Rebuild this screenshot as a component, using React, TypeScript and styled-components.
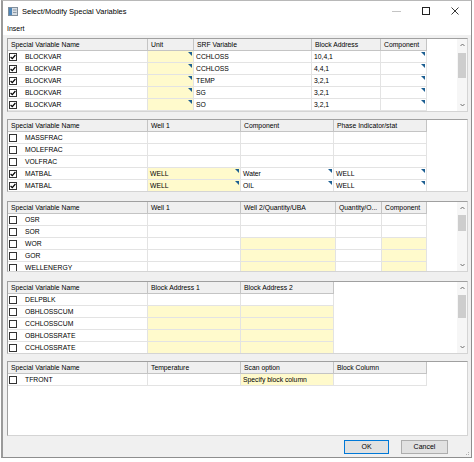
import React from 'react'
import styled, { createGlobalStyle } from 'styled-components'

const GlobalStyle = createGlobalStyle`
  body {
    margin: 0;
    background: #ffffff;
    font-family: 'Liberation Sans', Arial, sans-serif;
  }
`

interface CellData {
  text?: string
  yellow?: boolean
  drop?: boolean
}

interface RowData {
  name: string
  checked?: boolean
  cells: CellData[]
}

interface ScrollData {
  thumbTop: number
  thumbHeight: number
}

interface SectionData {
  cols: number[]
  headers: string[]
  rows: RowData[]
  height: number
  gapBefore: number
  scroll?: ScrollData
}

const Y: CellData = { yellow: true }
const E: CellData = {}

const sections: SectionData[] = [
  {
    cols: [140, 46, 118, 69, 46],
    headers: ['Special Variable Name', 'Unit', 'SRF Variable', 'Block Address', 'Component'],
    height: 74,
    gapBefore: 0,
    scroll: { thumbTop: 2, thumbHeight: 25 },
    rows: [
      ['CCHLOSS', '10,4,1'],
      ['CCHLOSS', '4,4,1'],
      ['TEMP', '3,2,1'],
      ['SG', '3,2,1'],
      ['SO', '3,2,1']
    ].map(([srf, addr]) => ({
      name: 'BLOCKVAR',
      checked: true,
      cells: [{ yellow: true, drop: true }, { text: srf }, { text: addr }, { drop: true }]
    }))
  },
  {
    cols: [140, 93, 93, 93],
    headers: ['Special Variable Name', 'Well 1', 'Component', 'Phase Indicator/stat'],
    height: 73,
    gapBefore: 7,
    rows: [
      { name: 'MASSFRAC', cells: [E, E, E] },
      { name: 'MOLEFRAC', cells: [E, E, E] },
      { name: 'VOLFRAC', cells: [E, E, E] },
      {
        name: 'MATBAL',
        checked: true,
        cells: [{ text: 'WELL', yellow: true, drop: true }, { text: 'Water', drop: true }, { text: 'WELL', drop: true }]
      },
      {
        name: 'MATBAL',
        checked: true,
        cells: [{ text: 'WELL', yellow: true, drop: true }, { text: 'OIL', drop: true }, { text: 'WELL', drop: true }]
      }
    ]
  },
  {
    cols: [140, 93, 95, 46, 45],
    headers: ['Special Variable Name', 'Well 1', 'Well 2/Quantity/UBA', 'Quantity/O...', 'Component'],
    height: 71,
    gapBefore: 9,
    scroll: { thumbTop: 1, thumbHeight: 16 },
    rows: [
      { name: 'OSR', cells: [E, E, E, E] },
      { name: 'SOR', cells: [E, E, E, E] },
      { name: 'WOR', cells: [E, Y, E, Y] },
      { name: 'GOR', cells: [E, Y, E, Y] },
      { name: 'WELLENERGY', cells: [E, Y, E, Y] }
    ]
  },
  {
    cols: [140, 93, 93],
    headers: ['Special Variable Name', 'Block Address 1', 'Block Address 2'],
    height: 73,
    gapBefore: 9,
    scroll: { thumbTop: 1, thumbHeight: 23 },
    rows: [
      { name: 'DELPBLK', cells: [E, E] },
      { name: 'OBHLOSSCUM', cells: [Y, Y] },
      { name: 'CCHLOSSCUM', cells: [Y, Y] },
      { name: 'OBHLOSSRATE', cells: [Y, Y] },
      { name: 'CCHLOSSRATE', cells: [Y, Y] }
    ]
  },
  {
    cols: [140, 93, 93, 93],
    headers: ['Special Variable Name', 'Temperature', 'Scan option', 'Block Column'],
    height: 75,
    gapBefore: 7,
    rows: [{ name: 'TFRONT', cells: [E, { text: 'Specify block column', yellow: true }, E] }]
  }
]

const Window = styled.div`
  margin-left: 1px;
  width: 471px;
  height: 458px;
  box-sizing: border-box;
  border: 1px solid #8e8e8e;
  border-left: 2px solid #9a9a9a;
  border-top-color: #b8b8b8;
  background: #f0f0f0;
  display: flex;
  flex-direction: column;
`

const TitleBar = styled.div`
  height: 20px;
  background: #ffffff;
  display: flex;
  align-items: center;
  padding-left: 5px;
  font-size: 7.5px;
  color: #000;
`

const TitleText = styled.span`
  margin-left: 4px;
  flex: 1;
`

const Controls = styled.div`
  display: flex;
  height: 100%;
  padding-right: 2px;
`

const ControlButton = styled.div<{ $dim?: boolean }>`
  width: 29px;
  display: flex;
  align-items: center;
  justify-content: center;
  color: ${p => (p.$dim ? '#c4c4c4' : '#222')};
`

const MenuBar = styled.div`
  height: 14px;
  background: #ffffff;
  display: flex;
  align-items: center;
  padding-left: 4px;
  font-size: 7px;
  color: #000;
`

const Content = styled.div`
  flex: 1;
  display: flex;
  flex-direction: column;
  padding: 3px 3px 0 4px;
`

const Panel = styled.div<{ $h: number; $gap: number }>`
  height: ${p => p.$h}px;
  margin-top: ${p => p.$gap}px;
  box-sizing: border-box;
  border: 1px solid #a0a0a0;
  border-bottom-color: #d4d4d4;
  border-right-color: #d4d4d4;
  background: #ffffff;
  display: flex;
  overflow: hidden;
`

const Table = styled.div<{ $cols: string }>`
  display: grid;
  grid-template-columns: ${p => p.$cols};
  grid-auto-rows: 12px;
  align-content: start;
  font-size: 6.8px;
  color: #000;
`

const HeadCell = styled.div`
  box-sizing: border-box;
  background: #f0f0f0;
  border-right: 1px solid #c4c4c4;
  border-bottom: 1px solid #c4c4c4;
  padding-left: 3px;
  display: flex;
  align-items: center;
  white-space: nowrap;
  overflow: hidden;
`

const Cell = styled.div<{ $yellow?: boolean; $drop?: boolean }>`
  position: relative;
  box-sizing: border-box;
  background: ${p => (p.$yellow ? '#fffacc' : '#ffffff')};
  border-right: 1px solid #e3e3e3;
  border-bottom: 1px solid #e3e3e3;
  padding-left: 2px;
  display: flex;
  align-items: center;
  white-space: nowrap;
  overflow: hidden;

  &::after {
    content: '';
    display: ${p => (p.$drop ? 'block' : 'none')};
    position: absolute;
    top: 1px;
    right: 1px;
    border-top: 4px solid #1d5f92;
    border-left: 4px solid transparent;
  }
`

const NameCell = styled(Cell)`
  padding-left: 1px;
  gap: 8px;
`

const Box = styled.div`
  width: 8px;
  height: 8px;
  box-sizing: border-box;
  border: 1px solid #333;
  background: #fff;
  display: flex;
  align-items: center;
  justify-content: center;
`

const Filler = styled.div`
  flex: 1;
`

const Scrollbar = styled.div`
  width: 10px;
  background: #f6f6f6;
  display: flex;
  flex-direction: column;
`

const Arrow = styled.div`
  height: 12px;
  display: flex;
  align-items: center;
  justify-content: center;
`

const Track = styled.div`
  flex: 1;
`

const Thumb = styled.div<{ $top: number; $h: number }>`
  margin: ${p => p.$top}px 1px 0;
  height: ${p => p.$h}px;
  background: #cdcdcd;
`

const Footer = styled.div`
  height: 21px;
  display: flex;
  align-items: center;
  justify-content: flex-end;
  gap: 12px;
  padding-right: 23px;
  position: relative;
`

const Btn = styled.div<{ $primary?: boolean }>`
  width: ${p => (p.$primary ? 45 : 47)}px;
  height: 14px;
  box-sizing: border-box;
  border: 1px solid ${p => (p.$primary ? '#0078d7' : '#adadad')};
  background: #e1e1e1;
  font-size: 7px;
  display: flex;
  align-items: center;
  justify-content: center;
  color: #000;
`

const Grip = styled.svg`
  position: absolute;
  right: 1px;
  bottom: 1px;
`

const Check = () => (
  <svg width="6" height="6" viewBox="0 0 6 6">
    <polyline points="0.6,3 2.3,4.7 5.4,1" fill="none" stroke="#000" strokeWidth="1.2" />
  </svg>
)

const Chevron = ({ up }: { up?: boolean }) => (
  <svg width="5" height="4" viewBox="0 0 5 4">
    <polyline
      points={up ? '0.5,3 2.5,1 4.5,3' : '0.5,1 2.5,3 4.5,1'}
      fill="none"
      stroke="#606060"
      strokeWidth="0.9"
    />
  </svg>
)

const AppIcon = () => (
  <svg width="10" height="9" viewBox="0 0 10 9">
    <rect x="0.5" y="0.5" width="9" height="8" fill="#d7dde3" stroke="#7f8e9c" />
    <rect x="1" y="1" width="3" height="7" fill="#4f86b8" />
    <rect x="5" y="2.5" width="3.5" height="1" fill="#8a98a6" />
    <rect x="5" y="5" width="3.5" height="1" fill="#8a98a6" />
  </svg>
)

const Section = ({ data }: { data: SectionData }) => (
  <Panel $h={data.height} $gap={data.gapBefore}>
    <Table $cols={data.cols.map(c => `${c}px`).join(' ')}>
      {data.headers.map(h => (
        <HeadCell key={h}>{h}</HeadCell>
      ))}
      {data.rows.map((row, i) => (
        <React.Fragment key={i}>
          <NameCell>
            <Box>{row.checked && <Check />}</Box>
            {row.name}
          </NameCell>
          {row.cells.map((c, j) => (
            <Cell key={j} $yellow={c.yellow} $drop={c.drop}>
              {c.text}
            </Cell>
          ))}
        </React.Fragment>
      ))}
    </Table>
    <Filler />
    {data.scroll && (
      <Scrollbar>
        <Arrow>
          <Chevron up />
        </Arrow>
        <Track>
          <Thumb $top={data.scroll.thumbTop} $h={data.scroll.thumbHeight} />
        </Track>
        <Arrow>
          <Chevron />
        </Arrow>
      </Scrollbar>
    )}
  </Panel>
)

export default function App(): JSX.Element {
  return (
    <>
      <GlobalStyle />
      <Window>
        <TitleBar>
          <AppIcon />
          <TitleText>Select/Modify Special Variables</TitleText>
          <Controls>
            <ControlButton $dim>
              <svg width="9" height="1">
                <rect width="9" height="1" fill="currentColor" />
              </svg>
            </ControlButton>
            <ControlButton>
              <svg width="8" height="8">
                <rect x="0.5" y="0.5" width="7" height="7" fill="none" stroke="currentColor" />
              </svg>
            </ControlButton>
            <ControlButton>
              <svg width="8" height="8">
                <path d="M0.5 0.5 L7.5 7.5 M7.5 0.5 L0.5 7.5" stroke="currentColor" strokeWidth="0.9" />
              </svg>
            </ControlButton>
          </Controls>
        </TitleBar>
        <MenuBar>Insert</MenuBar>
        <Content>
          {sections.map((s, i) => (
            <Section key={i} data={s} />
          ))}
        </Content>
        <Footer>
          <Btn $primary>OK</Btn>
          <Btn>Cancel</Btn>
          <Grip width="6" height="6" viewBox="0 0 6 6">
            <rect x="4" y="4" width="1" height="1" fill="#b0b0b0" />
            <rect x="2" y="4" width="1" height="1" fill="#b0b0b0" />
            <rect x="4" y="2" width="1" height="1" fill="#b0b0b0" />
          </Grip>
        </Footer>
      </Window>
    </>
  )
}
